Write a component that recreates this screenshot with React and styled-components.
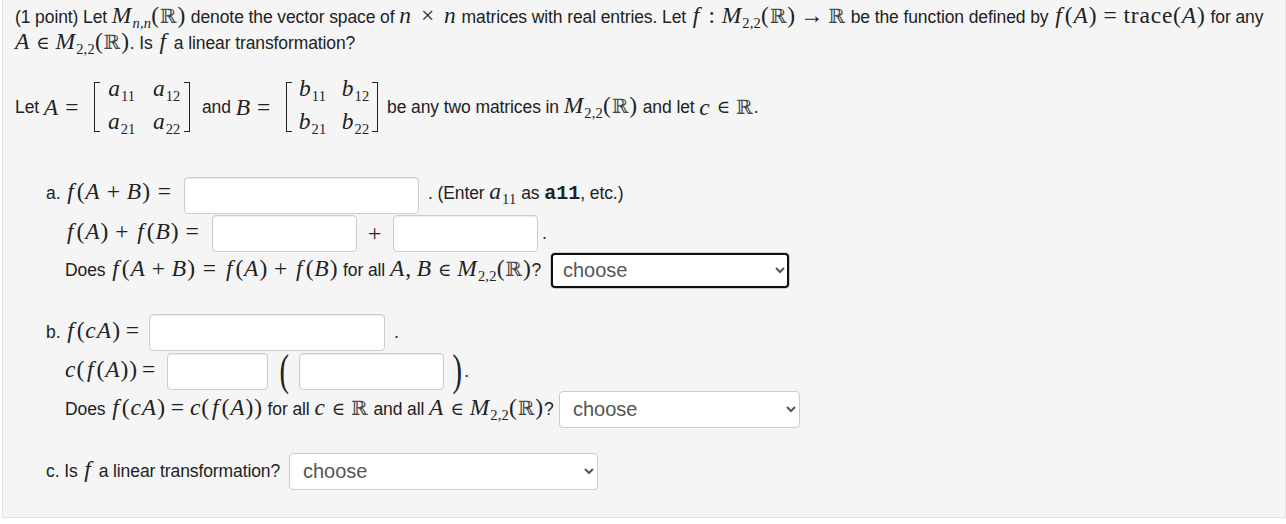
import React from 'react';
import styled, { createGlobalStyle } from 'styled-components';

const GlobalStyle = createGlobalStyle`
  html, body { margin: 0; padding: 0; background: #fff; }
  body { font-family: "Liberation Sans", Arial, sans-serif; color: #222; }
`;

const Panel = styled.div`
  box-sizing: border-box;
  width: 1284px;
  height: 518px;
  margin-left: 2px;
  padding: 4px 0 0 12px;
  background: #f5f5f5;
  border: 1px solid #e3e3e3;
  border-top: none;
  font-size: 17.5px;
  letter-spacing: -0.1px;
`;

const Intro = styled.p`
  margin: 0;
  line-height: 26px;
  white-space: nowrap;
`;

const MatrixLine = styled.div`
  display: flex;
  align-items: center;
  height: 60px;
  margin-top: 21px;
  white-space: nowrap;
`;

const Section = styled.div`
  margin-top: ${p => p.$top}px;
  padding-left: 31px;
`;

const Row = styled.div`
  display: flex;
  align-items: center;
  height: ${p => p.$h || 38}px;
  padding-left: ${p => p.$indent || 0}px;
  white-space: nowrap;
`;

// text in front of a control, wide enough that the control lands on its column
const Lead = styled.span`
  flex: none;
  width: ${p => p.$w}px;
  padding-bottom: ${p => p.$lift || 0}px;
`;

const Note = styled.span`
  padding-bottom: ${p => p.$lift || 0}px;
`;

const Gap = styled.span`
  display: inline-block;
  width: ${p => p.$w}px;
  flex: none;
`;

const Mi = styled.span`
  font-family: "Liberation Serif", "Times New Roman", serif;
  font-style: italic;
  font-size: 23.5px;
  line-height: 0;
  letter-spacing: 1px;
  padding: 0 ${p => p.$pad || 0}px;
`;

const Mn = styled.span`
  font-family: "Liberation Serif", "Times New Roman", serif;
  font-size: 23.5px;
  line-height: 0;
  letter-spacing: 0.8px;
`;

// relation and binary operators get TeX style space around them
const Op = styled(Mn)`
  margin: 0 ${p => p.$m || 6}px;
`;

const In = styled.span`
  font-family: "DejaVu Serif", serif;
  font-size: 18px;
  line-height: 0;
  margin: 0 6px;
`;

const Sub = styled.span`
  font-family: "Liberation Serif", "Times New Roman", serif;
  font-size: 14.5px;
  font-style: ${p => (p.$italic ? 'italic' : 'normal')};
  line-height: 0;
  letter-spacing: 0.2px;
  position: relative;
  top: 5px;
`;

const Bb = styled.span`
  font-family: "DejaVu Serif", serif;
  font-size: 20px;
  line-height: 0;
  letter-spacing: 1px;
  color: #444;
`;

const Code = styled.code`
  font-family: "Liberation Mono", monospace;
  font-weight: 700;
  font-size: 20px;
  letter-spacing: 0;
`;

const Matrix = styled.span`
  display: inline-grid;
  grid-template-columns: ${p => p.$cols};
  grid-auto-rows: 33px;
  align-items: center;
  justify-items: center;
  height: 50px;
  padding: 0 3px;
  margin: 0 ${p => p.$after}px 0 9px;
  align-content: center;
  position: relative;
  &::before, &::after {
    content: "";
    position: absolute;
    top: 0;
    bottom: 0;
    width: 5px;
    border: 1px solid #222;
  }
  &::before { left: 0; border-right: none; }
  &::after { right: 0; border-left: none; }
`;

const Field = styled.input`
  box-sizing: border-box;
  flex: none;
  width: ${p => p.$w}px;
  height: 37px;
  background: #fff;
  border: 1px solid #ccc;
  border-radius: 4px;
  box-shadow: inset 0 1px 1px rgba(0, 0, 0, 0.075);
  outline: none;
`;

const Choice = styled.select`
  box-sizing: border-box;
  flex: none;
  width: ${p => p.$w}px;
  height: ${p => p.$h || 37}px;
  padding: 0 ${p => (p.$focused ? 7 : 9)}px;
  background: #fff;
  color: #555;
  font-family: "Liberation Sans", Arial, sans-serif;
  font-size: 20px;
  border: 1px solid #ccc;
  border-radius: 4px;
  ${p => p.$focused && `
    outline: 2px solid #101010;
    outline-offset: -2px;
    box-shadow: 0 0 0 1px #ccc;
  `}
`;

const BigParen = styled.span`
  display: inline-block;
  font-family: "Liberation Serif", serif;
  font-size: 44px;
  line-height: 38px;
  transform: scale(0.65, 1);
`;

const R = () => <Bb>ℝ</Bb>;
const F = () => <Mi $pad={2}>f</Mi>;
const Eq = ({ m = 7 }) => <Op $m={m}>=</Op>;
const Plus = () => <Op $m={6}>+</Op>;
const M22 = () => <><Mi>M</Mi><Sub>2,2</Sub><Mn>(</Mn><R /><Mn>)</Mn></>;
const Sym = ({ n, d }) => <span><Mi>{n}</Mi><Sub>{d}</Sub></span>;

const Options = () => <option>choose</option>;

export default function App() {
  return (
    <>
      <GlobalStyle />
      <Panel>
        <Intro>
          (1 point) Let <Mi>M</Mi><Sub $italic>n,n</Sub><Mn>(</Mn><R /><Mn>)</Mn> denote the vector space of <Mi>n</Mi><Op $m={9}>×</Op><Mi>n</Mi> matrices with real entries. Let <F /><Op>:</Op><M22 /><Op $m={4}>→</Op><R /> be the function defined by <F /><Mn>(</Mn><Mi>A</Mi><Mn>)</Mn><Eq m={6} /><Mn>trace(</Mn><Mi>A</Mi><Mn>)</Mn> for any<br />
          <Mi>A</Mi><In>∈</In><M22 />. Is <F /> a linear transformation?
        </Intro>

        <MatrixLine>
          Let&nbsp;<Mi>A</Mi><Eq m={6} />
          <Matrix $cols="49px 41px" $after={7}>
            <Sym n="a" d="11" /><Sym n="a" d="12" />
            <Sym n="a" d="21" /><Sym n="a" d="22" />
          </Matrix>
          &nbsp;and&nbsp;<Mi>B</Mi><Eq m={6} />
          <Matrix $cols="47px 39px" $after={9}>
            <Sym n="b" d="11" /><Sym n="b" d="12" />
            <Sym n="b" d="21" /><Sym n="b" d="22" />
          </Matrix>
          be any two matrices in&nbsp;<span><M22 /></span>&nbsp;and let&nbsp;<Mi>c</Mi><In>∈</In><R />.
        </MatrixLine>

        <Section $top={39}>
          <Row>
            <Lead $w={138} $lift={4}>a. <F /><Mn>(</Mn><Mi>A</Mi><Plus /><Mi>B</Mi><Mn>)</Mn><Eq /></Lead>
            <Field $w={235} />
            <Gap $w={9} />
            <Note $lift={4}>. (Enter <Sym n="a" d="11" /> as <Code>a11</Code>, etc.)</Note>
          </Row>
          <Row $indent={19}>
            <Lead $w={147}><F /><Mn>(</Mn><Mi>A</Mi><Mn>)</Mn><Plus /><F /><Mn>(</Mn><Mi>B</Mi><Mn>)</Mn><Eq m={6} /></Lead>
            <Field $w={145} />
            <Gap $w={11} />
            <Mn>+</Mn>
            <Gap $w={11} />
            <Field $w={145} />
            <Gap $w={4} />
            <span>.</span>
          </Row>
          <Row $indent={19} $h={36}>
            <Lead $w={486}>Does <F /><Mn>(</Mn><Mi>A</Mi><Plus /><Mi>B</Mi><Mn>)</Mn><Eq /><F /><Mn>(</Mn><Mi>A</Mi><Mn>)</Mn><Plus /><F /><Mn>(</Mn><Mi>B</Mi><Mn>)</Mn> for all <Mi>A</Mi><Mn>,</Mn> <Mi>B</Mi><In>∈</In><M22 />?</Lead>
            <Choice $w={238} $h={35} $focused><Options /></Choice>
          </Row>
        </Section>

        <Section $top={25}>
          <Row $h={39}>
            <Lead $w={103}>b. <F /><Mn>(</Mn><Mi>c</Mi><Mi>A</Mi><Mn>)</Mn><Eq m={5} /></Lead>
            <Field $w={236} />
            <Gap $w={9} />
            <span>.</span>
          </Row>
          <Row $indent={19}>
            <Lead $w={102}><Mi>c</Mi><Mn>(</Mn><F /><Mn>(</Mn><Mi>A</Mi><Mn>))</Mn><Eq m={4} /></Lead>
            <Field $w={101} />
            <Gap $w={9} />
            <BigParen>(</BigParen>
            <Gap $w={7} />
            <Field $w={145} />
            <Gap $w={6} />
            <BigParen>)</BigParen>
            <span>.</span>
          </Row>
          <Row $indent={19}>
            <Lead $w={494}>Does <F /><Mn>(</Mn><Mi>c</Mi><Mi>A</Mi><Mn>)</Mn><Eq m={5} /><Mi>c</Mi><Mn>(</Mn><F /><Mn>(</Mn><Mi>A</Mi><Mn>))</Mn> for all <Mi>c</Mi><In>∈</In><R /> and all <Mi>A</Mi><In>∈</In><M22 />?</Lead>
            <Choice $w={241}><Options /></Choice>
          </Row>
        </Section>

        <Section $top={24}>
          <Row>
            <Lead $w={243}>c. Is <F /> a linear transformation?</Lead>
            <Choice $w={309}><Options /></Choice>
          </Row>
        </Section>
      </Panel>
    </>
  );
}
